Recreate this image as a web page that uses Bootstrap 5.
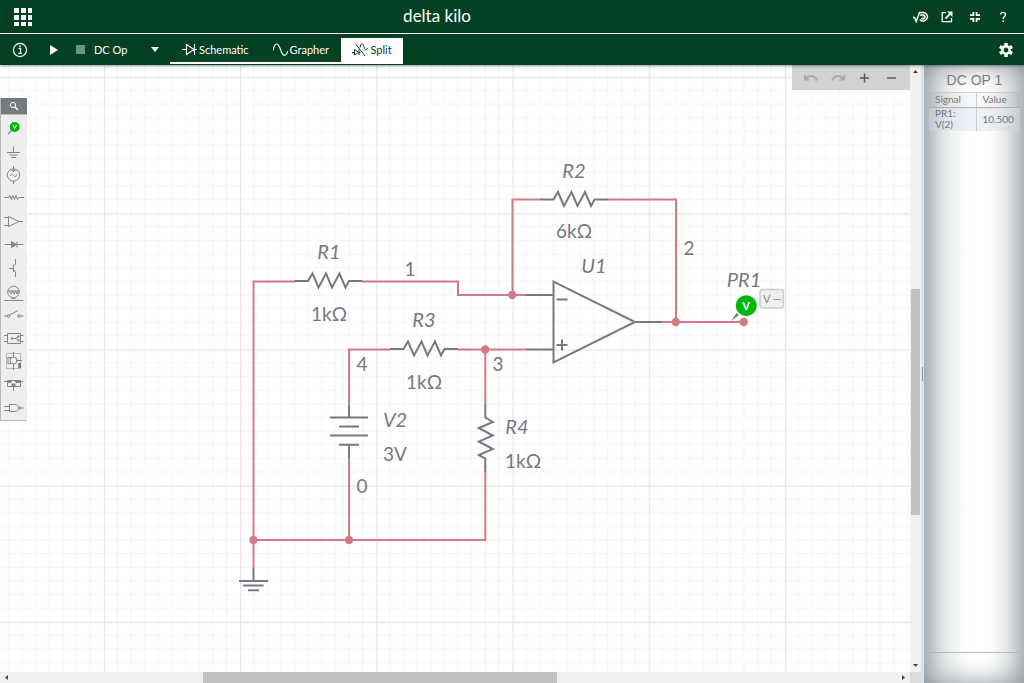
<!DOCTYPE html>
<html lang="en">
<head>
<meta charset="utf-8">
<meta name="viewport" content="width=device-width, initial-scale=1">
<title>delta kilo</title>
<link href="https://cdn.jsdelivr.net/npm/bootstrap@5.3.0/dist/css/bootstrap.min.css" rel="stylesheet">
<style>
  :root { --brand: #044123; --ink: #767a80; --wire: #d57986; }
  body { font-family: Lato, "Noto Sans", sans-serif; font-size: 11px; line-height: 16px; }
  svg { display: block; }
  button, select { font: inherit; color: inherit; border: 0; background: none; padding: 0; }
  .brand-bg { background: var(--brand); color: #fff; }
  .topbar { height: 33px; }
  .topbar-title { font-size: 17px; line-height: 24px; padding-bottom: 2px; }
  .topbar-actions { width: 210px; gap: 12px; padding-right: 15px; }
  .apps-btn { width: 60px; padding-left: 14px; }
  .toolbar { height: 31px; border-top: 1px solid #fff; box-sizing: content-box; box-shadow: 0 1px 3px #0006; z-index: 5; }
  .info-btn { margin-left: 12px; margin-right: 22px; }
  .settings-btn { margin-right: 11px; }
  .sim-select { width: 69px; appearance: none; outline: 0;
    background: url("data:image/svg+xml,%3Csvg xmlns='http://www.w3.org/2000/svg' viewBox='0 0 8 5'%3E%3Cpath d='M0 0h8L4 5z' fill='%23fff'/%3E%3C/svg%3E") no-repeat right center / 8px 5px; }
  .sim-select option { color: #000; }
  .view-tabs { height: 26px; margin-left: 7px; margin-top: 2px; }
  .view-tab { border-bottom: 2px solid #fff; gap: 2px; }
  .view-tab.active { background: #fff; color: var(--brand); width: 62px; }
  .shrinkable { min-width: 0; min-height: 0; }
  .sheet-scroll { background: #f0f0f0; }
  .vtrack { width: 11px; padding: 5px 1px; }
  .htrack { height: 11px; padding: 0 5px; }
  .thumb { background: #c1c1c1; }
  .corner { width: 11px; background: #dcdcdc; }
  .sheet text { font-size: 19px; fill: var(--ink); }
  .sheet .ref text { font-size: 20px; font-style: italic; }
  .sheet .probe-letter { fill: #fff; font-size: 11px; font-weight: 700; }
  .sheet .probe-value { fill: #888; font-size: 11px; }
  .palette { top: 33px; left: 0; width: 27px; background: #eee; border-left: 1px solid #bbb; border-bottom: 1px solid #bbb; }
  .palette-search { height: 17px; background: #767a80; color: #fff; border-bottom: 1px solid #bbb; }
  .palette-items { height: 305px; }
  .palette-items svg { fill: none; stroke: #80858a; stroke-width: 1; }
  .zoombar { top: 0; right: 0; width: 118px; height: 25px; background: #d2d2d2; padding: 0 5px; }
  .zoombar button { width: 27px; }
  .splitter { width: 3px; background: #dde4e8; }
  .splitter-grip { width: 1px; height: 14px; margin-left: 1px; background: #8c979e; }
  .results { width: 100px; padding: 5px 3px 30px 4px; color: #777;
    background: linear-gradient(90deg, #c8ccce, #e9ebec 20%, #fff 45%, #fff 62%, #eceeef 82%, #d2d5d7);
    box-shadow: inset 0 0 26px #8b9298; }
  .results-title { font-family: "Liberation Sans", sans-serif; font-size: 14px; line-height: 20px; color: #7c7c7c; margin-bottom: 2px; }
  .results-box { border: 1px solid #b5bbbd99; border-bottom-color: #b5bbbd; }
  .results table { font-size: 10px; line-height: 11px; table-layout: fixed; }
  .results th { font-weight: 400; height: 14px; padding: 0 6px; background: #7e8a8412; border-bottom: 1px solid #aaafb1; }
  .results th:first-child { width: 47px; }
  .results td { height: 24px; padding: 0 0 0 6px; background: #cddde866; }
  .results th + th, .results td + td { border-left: 1px solid #c9cfd2; }
</style>
</head>
<body class="vh-100 d-flex flex-column overflow-hidden">

<header class="brand-bg topbar d-flex align-items-center flex-shrink-0">
  <button class="apps-btn" aria-label="Apps">
    <svg width="18" height="18" fill="#fff"><path d="M0 0h5v5H0zM7 0h5v5H7zM14 0h4v5h-4zM0 7h5v5H0zM7 7h5v5H7zM14 7h4v5h-4zM0 14h5v4H0zM7 14h5v4H7zM14 14h4v4h-4z"/></svg>
  </button>
  <h1 class="topbar-title flex-grow-1 text-center fw-normal m-0">delta kilo</h1>
  <nav class="topbar-actions d-flex justify-content-end align-items-center" aria-label="Page actions">
    <button aria-label="Grade">
      <svg width="17" height="12" fill="none" stroke="#fff" stroke-width="1.4"><path d="M1 6.500h1.500l1.700 4L7.500 1.500h4a4.300 4.300 0 1 1-3.700 7M8 4h3a2 2 0 1 1-1.600 3.200M10.500 6h1"/></svg>
    </button>
    <button aria-label="Open in new window">
      <svg width="12" height="12" fill="none" stroke="#fff" stroke-width="1.300"><path d="M5 1.700H1.200v9h9.300V7"/><path d="M4.500 7.500L9 3" stroke-width="2"/><path d="M6 .5h5.500V6z" fill="#fff" stroke="none"/></svg>
    </button>
    <button class="mx-1" aria-label="Exit full screen">
      <svg width="12" height="12" fill="none" stroke="#fff" stroke-width="1.800"><path d="M1 4.200h3.400V1M7.600 1v3.200H11M1 7.800h3.400V11M7.600 11V7.800H11"/></svg>
    </button>
    <button aria-label="Help">
      <svg width="12" height="12" fill="none" stroke="#fff" stroke-width="1.400"><path d="M3.700 3.500C3.800 .7 8.600 .6 8.500 3.600 8.400 5.500 6.200 5.500 6.200 8.200M6.200 9.500v1.600"/></svg>
    </button>
  </nav>
</header>

<div class="brand-bg toolbar d-flex align-items-center flex-shrink-0 position-relative">
  <button class="info-btn" aria-label="Information">
    <svg width="16" height="16" fill="none" stroke="#fff"><circle cx="8" cy="8" r="6.600" stroke-width="1.200"/><path d="M6.500 6.500h2V11M6.300 11.300h3.600" stroke-width="1.200"/><path d="M7.300 3.600h1.600v1.600H7.300z" fill="#fff" stroke="none"/></svg>
  </button>
  <button class="me-3" aria-label="Run"><svg width="10" height="10" fill="#fff"><path d="M0 0v10l8-5z"/></svg></button>
  <button disabled aria-label="Stop"><svg width="10" height="9" fill="#6a9580"><path d="M0 0h9v9H0z"/></svg></button>
  <select class="sim-select ms-1 ps-1" aria-label="Simulation type"><option>DC Op</option><option>Transient</option></select>
  <div class="view-tabs d-flex" role="tablist">
    <button class="view-tab d-flex align-items-center ps-2 pe-2 ms-1" role="tab">
      <svg class="ms-1" width="15" height="13" fill="none" stroke="#fff" stroke-width="1.100"><path d="M0 6.500h4M4.500 1.500v10l7.500-5zM12.500 1v11M12.500 6.500H15"/></svg>Schematic
    </button>
    <button class="view-tab d-flex align-items-center ps-3 pe-2" role="tab">
      <svg width="15" height="13" fill="none" stroke="#fff" stroke-width="1.100"><path d="M0 7.500C2-1 5-1 7.500 6.500 10 14 13 14 15 8"/></svg><span class="me-1">Grapher</span>
    </button>
    <button class="view-tab active d-flex align-items-center justify-content-center" role="tab" aria-selected="true">
      <svg width="16" height="14" fill="none" stroke="#044123"><path d="M0 9.500h2.500M2.500 6.500v5.500l4-2.700zM7 6.500v5.500M7 9.500h1.500M4 1.500L13 13M8 4.500C9 0 11-.5 12 3.500 12.700 7 14 8 15.500 5"/></svg>Split
    </button>
  </div>
  <button class="settings-btn ms-auto" aria-label="Settings">
    <svg width="14" height="14" viewBox="-7 -7 14 14" fill="none" stroke="#fff"><circle r="3.700" stroke-width="2.600"/><path d="M0-7v3M0 4v3M-6.100-3.500l2.600 1.500M3.500 2l2.600 1.500M-6.100 3.500L-3.500 2M3.500-2l2.600-1.500" stroke-width="3.500"/></svg>
  </button>
</div>

<main class="d-flex flex-grow-1 shrinkable">
  <section class="d-flex flex-column flex-grow-1 shrinkable">
    <div class="d-flex flex-grow-1 shrinkable">
      <div class="position-relative flex-grow-1 overflow-hidden shrinkable">
        <svg class="sheet w-100 h-100" role="img" aria-label="Circuit schematic">
          <defs>
            <pattern id="grid" width="136.200" height="136.200" patternUnits="userSpaceOnUse" x="103.900" y="76.900">
              <path d="M13.600 0v137M27.200 0v137M40.900 0v137M54.500 0v137M68.100 0v137M81.700 0v137M95.300 0v137M109 0v137M122.600 0v137M0 13.600h137M0 27.200h137M0 40.900h137M0 54.500h137M0 68.100h137M0 81.700h137M0 95.300h137M0 109h137M0 122.600h137" stroke="#f5f5f5"/>
              <path d="M0 0v137M0 0h137" stroke="#e4e4e4" stroke-width="2.400"/>
            </pattern>
            <g id="resistor"><path d="M-34 0h13.500L-16-7.500-10 6.500-2.500-7.500 3.500 6.500 11-7.500 17 6.500 20.500 0H34"/></g>
          </defs>
          <g transform="translate(0 -65)">
            <rect y="65" width="100%" height="100%" fill="url(#grid)"/>
            <g fill="none" stroke="#d57986" stroke-width="2">
              <path d="M295 281.500H253.500V568M362 281.500h96V295h68M512.500 295v-95.500H540M608 199.500h68V322M662 322h82M349 405v-55.500h41M457 349.500h69M485.300 349.500V405M485.300 471v69H253.500M349 458v82"/>
            </g>
            <g fill="#d57986"><circle cx="512.300" cy="295" r="4.200"/><circle cx="675.800" cy="322" r="4.200"/><circle cx="743.700" cy="322" r="4.200"/><circle cx="485.300" cy="349.500" r="4.200"/><circle cx="253.500" cy="540" r="4.200"/><circle cx="349" cy="540" r="4.200"/></g>
            <g fill="none" stroke="#767a80" stroke-width="2">
              <use href="#resistor" x="328.500" y="281"/>
              <use href="#resistor" x="574" y="199.500"/>
              <use href="#resistor" x="424" y="349"/>
              <use href="#resistor" transform="translate(485.300 438) rotate(90)"/>
              <path d="M526 295h27M526 349.500h27M635 322h27M553.500 281.500v81l81.500-40.500zM556.500 299.500h11M556.500 345h11M562 339.500v11"/>
              <path d="M349 405v12.500M330 417.500h38M339 426.500h20M330 435.500h38M339 444.800h20M349 445v13"/>
              <path d="M253.500 568v12.500M239 581h29M243 585.500h20.500M248 590.300h11"/>
            </g>
            <g text-anchor="middle">
              <g class="ref"><text x="329" y="259">R1</text><text x="574" y="178">R2</text><text x="424" y="327">R3</text><text x="594" y="273">U1</text><text x="744" y="287">PR1</text><text x="395" y="427">V2</text><text x="517" y="434">R4</text></g>
              <text x="329" y="321">1kΩ</text><text x="574" y="238">6kΩ</text><text x="424" y="389">1kΩ</text><text x="395" y="461">3V</text><text x="523" y="468">1kΩ</text>
              <text x="410" y="276">1</text><text x="689" y="255">2</text><text x="498" y="371">3</text><text x="362" y="371">4</text><text x="362" y="493">0</text>
            </g>
            <path d="M731 321l5.500-8 2.500 2z" fill="#767a80"/>
            <circle cx="746.300" cy="305.700" r="10.500" fill="#00b80b"/>
            <text class="probe-letter" x="746" y="310" text-anchor="middle">V</text>
            <rect x="760" y="289.500" width="23.500" height="18.500" rx="3" fill="#efefef" stroke="#ccc" stroke-width="1.500"/>
            <text class="probe-value" x="763" y="303">V —</text>
          </g>
        </svg>

        <aside class="palette position-absolute" aria-label="Components">
          <button class="palette-search w-100 d-flex justify-content-center align-items-center" aria-label="Search components">
            <svg width="10" height="10" fill="none" stroke="#fff"><circle cx="4" cy="4" r="2.600"/><path d="M6 6l3 3" stroke-width="1.400"/></svg>
          </button>
          <div class="palette-items d-flex flex-column">
            <button class="flex-fill" aria-label="Probes"><svg width="26" height="22"><path d="M7 18l4-4" stroke-width="1.300"/><circle cx="13.700" cy="11" r="5" fill="#00b80b" stroke="none"/><path d="M12 9l1.700 3.500L15.400 9" stroke="#e8ffe8"/></svg></button>
            <button class="flex-fill" aria-label="Ground"><svg width="26" height="22"><path d="M12.500 7.500v6M6 13.500h13M8.500 16h8M10 18.500h5"/></svg></button>
            <button class="flex-fill" aria-label="Sources"><svg width="26" height="22"><circle cx="12.500" cy="12" r="6.200"/><path d="M12.500 3v6M10.500 7.500h4M12.500 18v3M9.500 13c1-3 2-2 3-.5s2 2 3-1"/></svg></button>
            <button class="flex-fill" aria-label="Passive"><svg width="26" height="22"><path d="M3 11.500h5l1-2 1.500 4 1.500-4 1.500 4 1.500-4 1.500 4 1-2h5.500"/></svg></button>
            <button class="flex-fill" aria-label="Analog"><svg width="26" height="22"><path d="M7.500 6.500v10l10.500-5zM3 7.500h4.500M3 15.500h4.500M18 11.500h4"/></svg></button>
            <button class="flex-fill" aria-label="Diodes"><svg width="26" height="22"><path d="M3.500 11.500h19M16 8.500v6"/><path d="M10.500 8.500v6l5-3z" fill="#80858a"/></svg></button>
            <button class="flex-fill" aria-label="Transistors"><svg width="26" height="22"><path d="M8 11.500h4.500M12.500 8v7M14.500 2v5l-2 2M12.500 13l2 2v5"/></svg></button>
            <button class="flex-fill" aria-label="Indicators"><svg width="26" height="22"><circle cx="12.500" cy="12" r="5.800"/><path d="M7 11h11M8.500 11l1.500 3 1.500-3 1.500 3 1.500-3 1.500 3 1-3M3 20.500h19M10.500 18.500h4"/></svg></button>
            <button class="flex-fill" aria-label="Switches"><svg width="26" height="22"><circle cx="7.500" cy="13" r="1.300"/><circle cx="18" cy="13" r="1.300"/><path d="M3 13h3M19.500 13h3M8.500 12L17 7.500"/></svg></button>
            <button class="flex-fill" aria-label="Modeling blocks"><svg width="26" height="22"><path d="M6.500 6.500h13v10h-13zM3 8.500h3.500M3 14.500h3.500M19.500 8.500h3M19.500 14.500h3M12 11.500h3l3-2M15 11.500l3 2"/><path d="M10 10.500h2v2h-2zM16.500 8.500h2v2h-2zM16.500 12.500h2v2h-2z" fill="#80858a" stroke="none"/></svg></button>
            <button class="flex-fill" aria-label="Electromechanical"><svg width="26" height="22"><path d="M5.500 3.500h14v15h-14z" stroke="#b4b7ba"/><path d="M7 7.500h3M7 13.500h3M7 7v7M12.500 2v5M12.500 14v6M15 10.500h6"/><circle cx="12.500" cy="10.500" r="3.500"/><path d="M17.500 13v5" stroke="#c98a5c"/><path d="M19 13v5" stroke="#4f85b8" stroke-width="2"/></svg></button>
            <button class="flex-fill" aria-label="Connectors"><svg width="26" height="22"><path d="M6.500 6.500h13v6h-13zM3 7.500h8M14 7.500h8M12.500 12v5"/><path d="M10.500 9.500h4v3h-4zM7 7h3v2H7zM15 7h4v2h-4z" fill="#80858a" stroke="none"/></svg></button>
            <button class="flex-fill" aria-label="Digital"><svg width="26" height="22"><path d="M8.500 7.500h5c6 0 6 7 0 7h-5zM3 9.500h5.500M3 13.500h5.500M20 11h2.500"/><circle cx="19" cy="11" r="1"/></svg></button>
          </div>
        </aside>

        <div class="zoombar position-absolute d-flex align-items-center" role="toolbar" aria-label="Edit and zoom">
          <button disabled aria-label="Undo"><svg class="mx-auto" width="16" height="12" fill="none" stroke="#aaa" stroke-width="2"><path d="M3.500 6C7 2.500 11.500 3.500 14 8.500"/><path d="M1 2v6.500h6z" fill="#aaa" stroke="none"/></svg></button>
          <button disabled aria-label="Redo"><svg class="mx-auto" width="16" height="12" fill="none" stroke="#aaa" stroke-width="2"><path d="M12.500 6C9 2.500 4.500 3.500 2 8.500"/><path d="M15 2v6.500H9z" fill="#aaa" stroke="none"/></svg></button>
          <button aria-label="Zoom in"><svg class="mx-auto" width="10" height="10" stroke="#555" stroke-width="1.400"><path d="M0 5h9M4.500 .5v9"/></svg></button>
          <button aria-label="Zoom out"><svg class="mx-auto" width="10" height="10" stroke="#555" stroke-width="1.400"><path d="M0 5h9"/></svg></button>
        </div>
      </div>
      <div class="sheet-scroll vtrack d-flex flex-column flex-shrink-0">
        <svg class="mx-auto" width="5" height="3" fill="#444"><path d="M0 3L2.500 0 5 3z"/></svg>
        <div class="flex-grow-1"><div style="height:36.500%"></div><div class="thumb" style="height:38.300%"></div></div>
        <svg class="mx-auto" width="5" height="3" fill="#444"><path d="M0 0h5L2.500 3z"/></svg>
      </div>
    </div>
    <div class="d-flex flex-shrink-0">
      <div class="sheet-scroll htrack d-flex align-items-center flex-grow-1">
        <svg width="3" height="5" fill="#444"><path d="M3 0v5L0 2.500z"/></svg>
        <div class="flex-grow-1 h-100 d-flex"><div style="width:21.800%"></div><div class="thumb" style="width:39.600%"></div></div>
        <svg width="3" height="5" fill="#444"><path d="M0 0v5l3-2.500z"/></svg>
      </div>
      <div class="corner"></div>
    </div>
  </section>
  <div class="splitter d-flex align-items-center flex-shrink-0"><div class="splitter-grip"></div></div>
  <aside class="results d-flex flex-column flex-shrink-0">
    <h2 class="results-title text-center fw-normal">DC OP 1</h2>
    <div class="results-box flex-grow-1">
      <table class="w-100">
        <thead><tr><th scope="col">Signal</th><th scope="col">Value</th></tr></thead>
        <tbody><tr><td>PR1:<br>V(2)</td><td>10.500</td></tr></tbody>
      </table>
    </div>
  </aside>
</main>
<script src="https://cdn.jsdelivr.net/npm/bootstrap@5.3.0/dist/js/bootstrap.bundle.min.js"></script>
</body>
</html>
